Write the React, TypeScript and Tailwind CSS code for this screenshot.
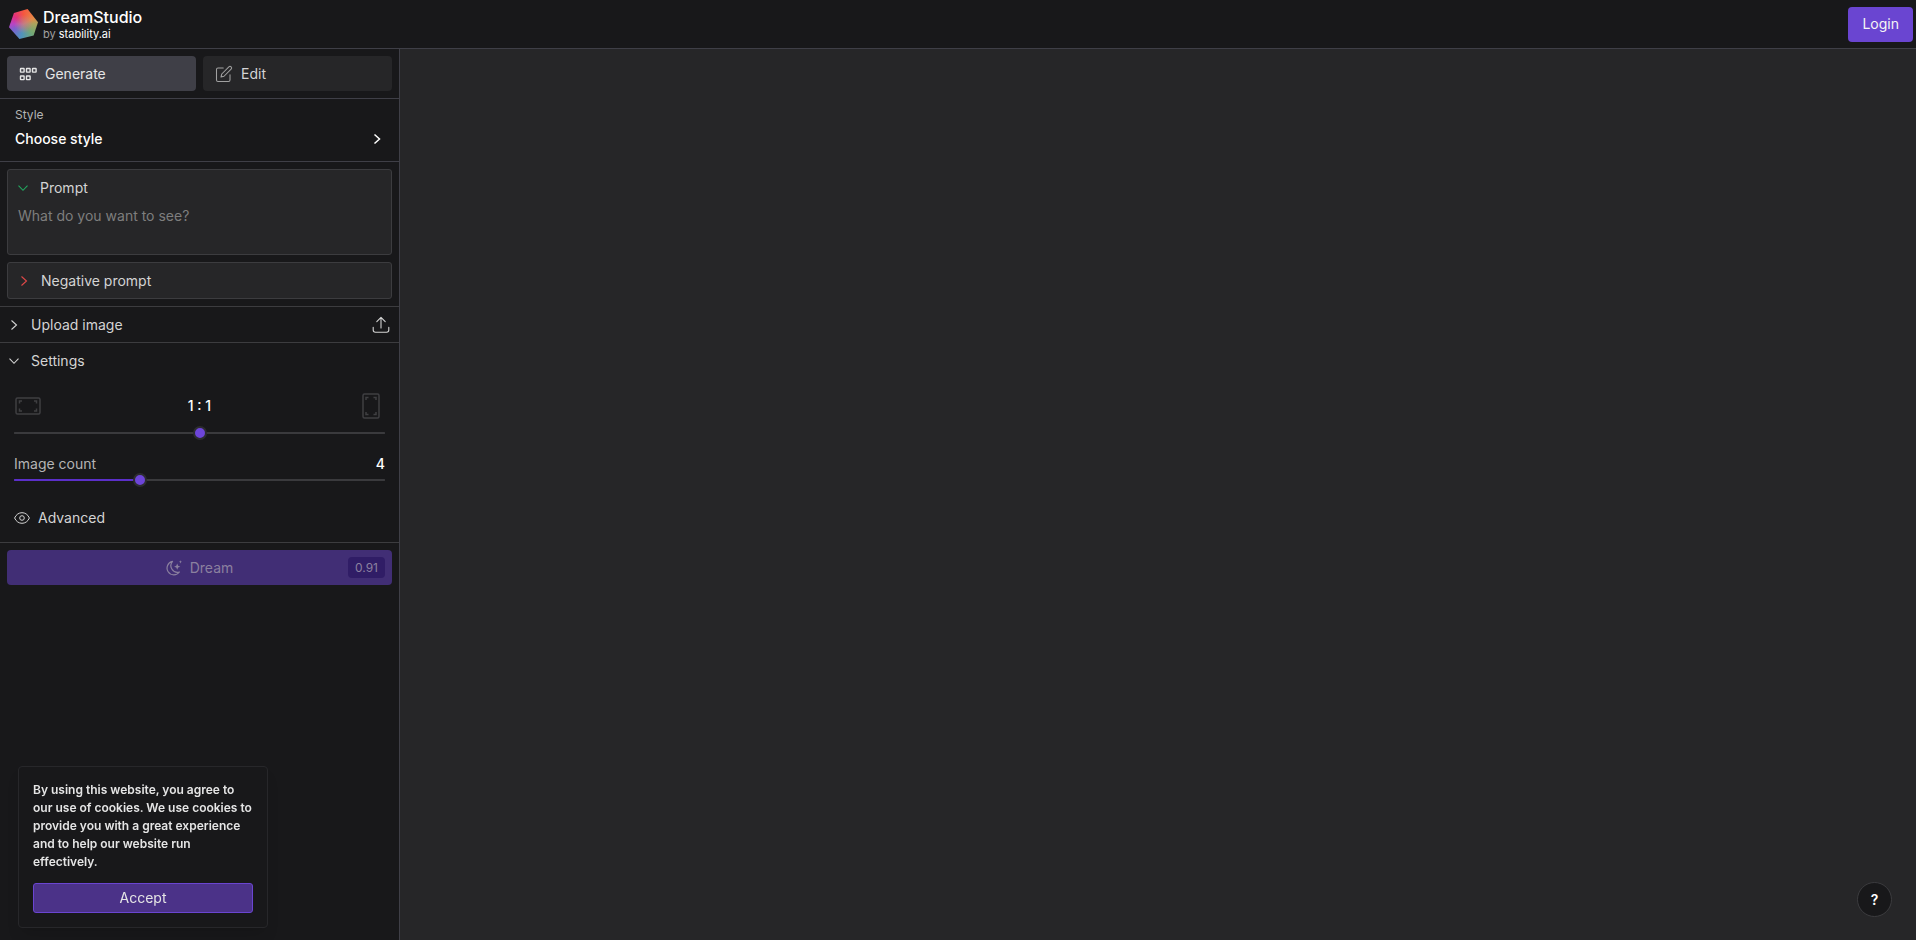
import { useState } from "react";
import type { InputHTMLAttributes } from "react";
import { FiEdit } from "react-icons/fi";

const Chevron = ({ className = "" }: { className?: string }) => (
  <svg viewBox="0 0 14 14" fill="none" stroke="currentColor" className={`size-3.5 ${className}`} aria-hidden="true">
    <path d="M4.5 2.5 9.5 7l-5 4.5" strokeWidth="1.1" />
  </svg>
);

const ChevronDown = ({ className = "" }: { className?: string }) => (
  <svg viewBox="0 0 14 14" fill="none" stroke="currentColor" className={`size-3.5 ${className}`} aria-hidden="true">
    <path d="m2.5 4.7 4.5 4.6 4.5-4.6" strokeWidth="1.1" />
  </svg>
);

const GridIcon = () => (
  <svg viewBox="0 0 18 14" fill="none" stroke="currentColor" strokeWidth="1.4" className="h-3.5 w-4.5" aria-hidden="true">
    <rect x="1.5" y="1.5" width="3.6" height="3.6" rx="0.4" />
    <rect x="7.5" y="1.5" width="3.6" height="3.6" rx="0.4" />
    <rect x="13.5" y="1.5" width="3.6" height="3.6" rx="0.4" />
    <rect x="1.5" y="9" width="3.6" height="3.6" rx="0.4" />
    <rect x="7.5" y="9" width="3.6" height="3.6" rx="0.4" />
  </svg>
);

const UploadIcon = () => (
  <svg viewBox="0 0 18 18" fill="none" stroke="currentColor" strokeWidth="1.1" strokeLinecap="round" strokeLinejoin="round" className="size-4.5" aria-hidden="true">
    <path d="M9 12V1.5M4.8 5.7 9 1.3l4.2 4.4" />
    <path d="M1.2 11.3V14c0 1.400.8 2.200 2.200 2.200h11.200c1.400 0 2.200-.8 2.200-2.200v-2.700" />
  </svg>
);

const EyeIcon = () => (
  <svg viewBox="0 0 16 14" fill="none" stroke="currentColor" strokeWidth="1" className="h-3.5 w-4" aria-hidden="true">
    <path d="M.6 7C2.2 3.4 4.9 1.7 8 1.7S13.8 3.4 15.4 7C13.8 10.6 11.1 12.3 8 12.3S2.2 10.6.6 7Z" />
    <circle cx="8" cy="7" r="2.3" />
  </svg>
);

const MoonIcon = () => (
  <svg viewBox="0 0 16 16" className="size-4" aria-hidden="true">
    <path
      d="M6.500 1.400A6.800 6.800 0 1 0 13.400 12 6.600 6.600 0 0 1 6.500 1.400Z"
      fill="none"
      stroke="currentColor"
      strokeWidth="1.2"
      strokeLinejoin="round"
    />
    <path d="m11.200 3.600.9 2.200 2.200.9-2.200.9-.9 2.200-.9-2.200-2.200-.9 2.200-.9zM14.500.2l.5 1.200 1 .4-1 .4-.5 1.200-.5-1.200-1.200-.4 1.200-.4z" fill="currentColor" />
  </svg>
);

const LandscapeIcon = ({ className = "" }: { className?: string }) => (
  <svg viewBox="0 0 26 18" fill="none" stroke="currentColor" className={`h-4.5 w-6.5 ${className}`} aria-hidden="true">
    <rect x="1" y="1" width="24" height="16" rx="1.5" strokeWidth="1.5" />
    <path d="M4.5 6.5V4H7M19 4h2.5v2.5M21.5 11.5V14H19M7 14H4.5v-2.5" strokeWidth="1.5" />
  </svg>
);

const Logo = () => (
  <div
    aria-hidden="true"
    className="h-[30px] w-[29px] bg-[radial-gradient(circle,#c47c86_0%,transparent_45%),conic-gradient(#f5573f,#e58a48_60deg,#a9a45e_90deg,#74a873_135deg,#4f93bd_190deg,#7a62cf_240deg,#b944c4_270deg,#e0307e_310deg,#f5573f)] [clip-path:polygon(17%_13%,64%_0,100%_44%,85%_88%,36%_100%,0_61%)]"
  />
);

const Slider = ({ value, filled, min, max, ...rest }: InputHTMLAttributes<HTMLInputElement> & { value: number; min: number; max: number; filled?: boolean }) => {
  const fill = filled ? ((value - min) / (max - min)) * 100 : 0;
  return (
    <input
      type="range"
      value={value}
      min={min}
      max={max}
      style={{ backgroundImage: `linear-gradient(to right, #5b2fc9 ${fill}%, #3a3a3d ${fill}%)` }}
      className="block h-3.5 w-full cursor-pointer appearance-none rounded-full bg-[length:100%_2px] bg-center bg-no-repeat [&::-webkit-slider-thumb]:size-3.5 [&::-webkit-slider-thumb]:appearance-none [&::-webkit-slider-thumb]:rounded-full [&::-webkit-slider-thumb]:border-2 [&::-webkit-slider-thumb]:border-[#2c2c30] [&::-webkit-slider-thumb]:bg-[#6d45d9]"
      {...rest}
    />
  );
};

const Header = () => (
  <header className="flex h-[49px] shrink-0 items-center justify-between border-b border-zinc-700 pr-[3px] pl-[9px]">
    <a href="#" className="flex items-center gap-[5px]">
      <Logo />
      <span className="flex flex-col pt-px">
        <span className="text-base leading-[18px] font-medium text-white">DreamStudio</span>
        <span className="text-[11px] leading-4 text-neutral-400">
          by <span className="text-white">stability.ai</span>
        </span>
      </span>
    </a>
    <button type="button" className="h-[35px] rounded bg-[#6a45d1] px-3.5 text-neutral-100">
      Login
    </button>
  </header>
);

const CookieNotice = () => (
  <div className="fixed bottom-3 left-[18px] w-[250px] rounded border border-zinc-800 bg-[#18181a] px-3.5 pt-3.5 pb-3.5 shadow-lg">
    <p className="text-xs leading-[18px] font-semibold text-neutral-200">
      By using this website, you agree to our use of cookies. We use cookies to provide you with a great experience and to help our website run effectively.
    </p>
    <button type="button" className="mt-3 h-[30px] w-full rounded-[3px] border border-[#6a45d1] bg-[#4b3288] text-neutral-200">
      Accept
    </button>
  </div>
);

const App = () => {
  const [ratio, setRatio] = useState(50);
  const [count, setCount] = useState(4);
  const [prompt, setPrompt] = useState("");

  return (
    <div className="flex min-h-screen flex-col bg-[#18181a] font-['Inter',sans-serif] text-sm text-neutral-300">
      <Header />

      <div className="flex grow">
        {/* Sidebar */}
        <aside className="w-[400px] shrink-0 border-r border-zinc-700">
          <nav className="grid grid-cols-2 gap-[7px] border-b border-zinc-700 p-[7px]">
            <button type="button" className="flex h-[35px] items-center gap-2 rounded bg-zinc-700 px-3 text-neutral-200">
              <GridIcon />
              Generate
            </button>
            <button type="button" className="flex h-[35px] items-center gap-2 rounded bg-[#262628] px-3">
              <FiEdit strokeWidth={1.4} className="size-[18px] text-neutral-400" />
              Edit
            </button>
          </nav>

          <button type="button" className="flex h-[63px] w-full flex-col justify-center border-b border-zinc-700 px-[15px] text-left">
            <span className="text-xs leading-[18px] text-[#b4b4b4]">Style</span>
            <span className="flex w-full items-center justify-between leading-[30px] font-medium text-white">
              Choose style
              <Chevron className="[&_path]:stroke-[1.5]" />
            </span>
          </button>

          <div className="flex flex-col gap-[7px] border-b border-[#3c3c3f] p-[7px]">
            <div className="h-[86px] rounded-[3px] border border-[#3c3c3f] bg-[#262628] px-2">
              <label htmlFor="prompt" className="flex h-9 items-center gap-2.5">
                <ChevronDown className="text-[#22a860]" />
                Prompt
              </label>
              <textarea
                id="prompt"
                value={prompt}
                onChange={(e) => setPrompt(e.target.value)}
                placeholder="What do you want to see?"
                className="block h-11 w-full resize-none px-0.5 outline-none placeholder:text-[#7e7e7e]"
              />
            </div>
            <button type="button" className="flex h-[37px] items-center gap-2.5 rounded-[3px] border border-[#3c3c3f] bg-[#262628] px-[9px]">
              <Chevron className="text-[#e04848]" />
              Negative prompt
            </button>
          </div>

          <div className="flex h-9 items-center justify-between border-b border-[#3c3c3f] pr-[9px] pl-[7px]">
            <button type="button" className="flex items-center gap-2.5">
              <Chevron />
              Upload image
            </button>
            <button type="button" aria-label="Upload">
              <UploadIcon />
            </button>
          </div>

          <section className="border-b border-[#3c3c3f]">
            <button type="button" className="flex h-9 w-full items-center gap-2.5 px-[7px]">
              <ChevronDown />
              Settings
            </button>

            <div className="px-3.5 pb-2">
              <div className="mt-3.5 flex h-[26px] items-center justify-between px-px text-[#3f3f42]">
                <LandscapeIcon />
                <label htmlFor="ratio" className="font-medium text-white">
                  1 : 1
                </label>
                <LandscapeIcon className="rotate-90" />
              </div>
              <div className="mt-[7px]">
                <Slider id="ratio" value={ratio} min={0} max={100} onChange={(e) => setRatio(Number(e.target.value))} />
              </div>

              <div className="mt-[15px] flex h-[18px] items-center justify-between">
                <label htmlFor="count" className="text-[#b4b4b4]">
                  Image count
                </label>
                <span className="font-medium text-white">{count}</span>
              </div>
              <Slider id="count" filled value={count} min={1} max={10} onChange={(e) => setCount(Number(e.target.value))} />

              <button type="button" className="mt-3.5 flex h-[33px] items-center gap-2">
                <EyeIcon />
                Advanced
              </button>
            </div>
          </section>

          <div className="p-[7px]">
            <button type="button" disabled className="grid h-[35px] w-full grid-cols-[1fr_auto_1fr] items-center rounded bg-[#412e75] px-[7px] text-[#8b809f]">
              <span className="col-start-2 flex items-center gap-2">
                <MoonIcon />
                Dream
              </span>
              <span className="justify-self-end rounded bg-[#301d66] px-[7px] text-xs leading-[21px]">0.91</span>
            </button>
          </div>
        </aside>

        {/* Canvas */}
        <main className="grow bg-[#262628]" />
      </div>

      <CookieNotice />

      <button type="button" className="fixed right-6 bottom-[23px] size-[35px] rounded-full border border-[#3c3c3f] bg-[#18181a] font-semibold text-white">
        ?
      </button>
    </div>
  );
};

export default App;
